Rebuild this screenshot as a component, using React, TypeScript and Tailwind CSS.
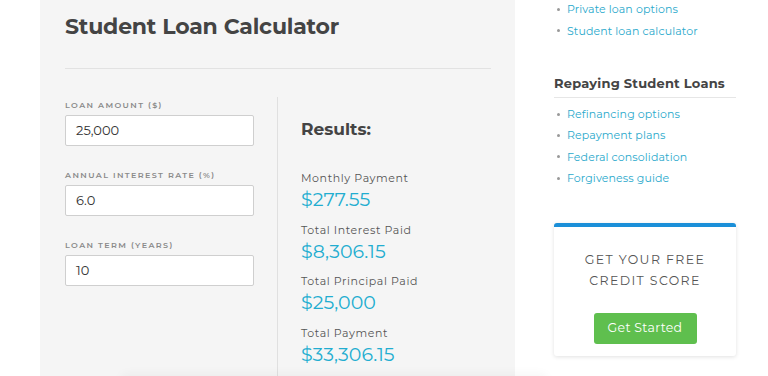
import React from "react"

const font = { fontFamily: '"Montserrat", "Noto Sans", "Open Sans", sans-serif' }

function Field({ label, value }: { label: string; value: string }) {
  return (
    <div className="h-[70px]">
      <div className="text-[8px] leading-[12px] font-semibold tracking-[1.4px] text-[#8a8a8a] uppercase">{label}</div>
      <div className="mt-[4px] w-[189px] h-[31px] bg-white border border-[#cfcfcf] rounded-[2px] flex items-center px-[10px] text-[13px] text-[#333]">
        {value}
      </div>
    </div>
  )
}

function Result({ label, value }: { label: string; value: string }) {
  return (
    <div className="h-[51.7px]">
      <div className="text-[11px] leading-[14px] tracking-[0.6px] text-[#555]">{label}</div>
      <div className="text-[19px] leading-[30px] text-[#22add0]">{value}</div>
    </div>
  )
}

function LinkItem({ children }: { children: React.ReactNode }) {
  return (
    <li className="flex items-center h-[21.3px] text-[11px] tracking-[0.1px] text-[#2aa9cc]">
      <span className="w-[3px] h-[3px] rounded-full bg-[#999] ml-[3px] mr-[7px]" />
      {children}
    </li>
  )
}

export default function App() {
  return (
    <div className="w-[768px] h-[376px] bg-white overflow-hidden relative flex" style={font}>
      {/* calculator panel */}
      <div className="ml-[40px] w-[475px] h-full bg-[#f5f5f5] pl-[25px] pr-[24px]">
        <h1 className="pt-[13px] text-[22px] leading-[28px] font-bold text-[#444] tracking-[-0.2px]">Student Loan Calculator</h1>
        <div className="mt-[27px] h-px bg-[#e2e2e2]" />
        <div className="flex mt-[28px]">
          <div className="w-[212px] pt-[2px]">
            <Field label="Loan Amount ($)" value="25,000" />
            <Field label="Annual Interest Rate (%)" value="6.0" />
            <Field label="Loan Term (Years)" value="10" />
          </div>
          <div className="w-px h-[280px] bg-[#e0e0e0]" />
          <div className="pl-[23px] pt-[20px]">
            <div className="text-[17px] leading-[24px] font-bold text-[#444]">Results:</div>
            <div className="mt-[30px]">
              <Result label="Monthly Payment" value="$277.55" />
              <Result label="Total Interest Paid" value="$8,306.15" />
              <Result label="Total Principal Paid" value="$25,000" />
              <Result label="Total Payment" value="$33,306.15" />
            </div>
          </div>
        </div>
      </div>

      {/* sidebar */}
      <div className="ml-[39px] w-[182px]">
        <ul className="-mt-[1px]">
          <LinkItem>Private loan options</LinkItem>
          <LinkItem>Student loan calculator</LinkItem>
        </ul>
        <h2 className="mt-[32px] text-[13px] leading-[18px] font-bold text-[#444] tracking-[0.2px]">Repaying Student Loans</h2>
        <div className="mt-[5px] h-px bg-[#e6e6e6]" />
        <ul className="mt-[6px]">
          <LinkItem>Refinancing options</LinkItem>
          <LinkItem>Repayment plans</LinkItem>
          <LinkItem>Federal consolidation</LinkItem>
          <LinkItem>Forgiveness guide</LinkItem>
        </ul>
        <div className="mt-[34px] h-[133px] bg-white border-t-[4px] border-[#1b8fd8] rounded-[3px] shadow-[0_1px_4px_rgba(0,0,0,0.12)] flex flex-col items-center">
          <div className="mt-[22px] text-[12.5px] leading-[21px] tracking-[1.4px] text-[#555] text-center">
            GET YOUR FREE
            <br />
            CREDIT SCORE
          </div>
          <div className="mt-[22px] w-[103px] h-[31px] rounded-[3px] bg-[#5fbf4e] text-white text-[12.5px] flex items-center justify-center tracking-[0.3px]">
            Get Started
          </div>
        </div>
      </div>

      <div className="absolute left-[120px] right-[220px] bottom-[-14px] h-[14px] rounded-full shadow-[0_-3px_10px_rgba(0,0,0,0.035)]" />
    </div>
  )
}
